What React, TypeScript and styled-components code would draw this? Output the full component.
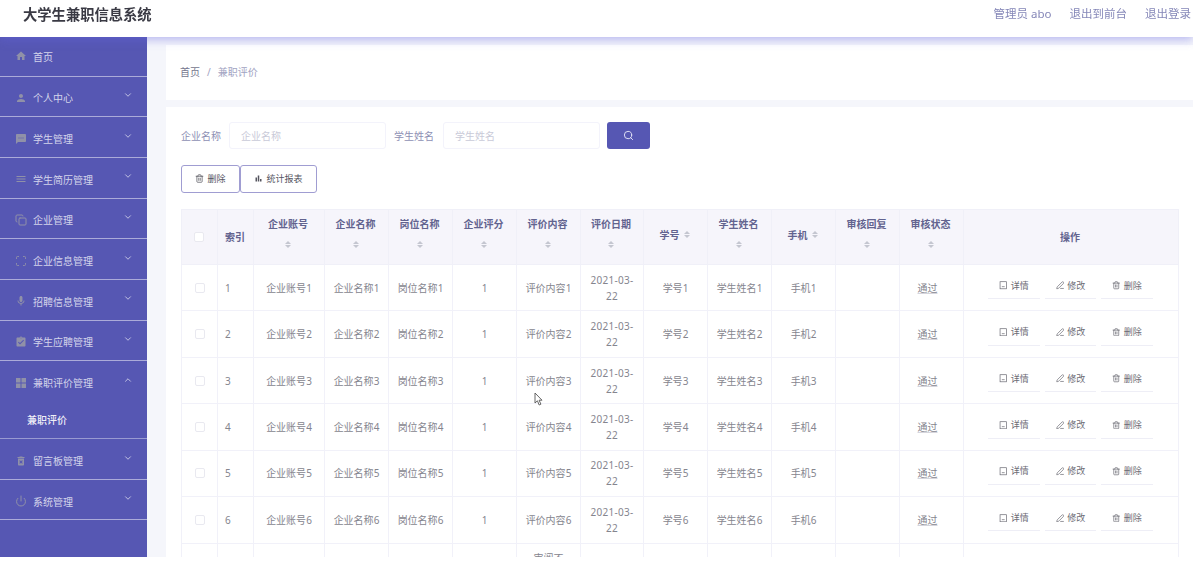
import React from "react";
import styled, { createGlobalStyle } from "styled-components";
import { ChevronDown, ChevronUp, Copy, Power, Scan, Search, Trash2, PenLine } from "lucide-react";
import { MdHome, MdPerson, MdSms, MdMenu, MdMic, MdAssignmentTurnedIn, MdDeleteForever, MdBarChart } from "react-icons/md";

const Global = createGlobalStyle`
  html, body { margin: 0; padding: 0; background: #fff; }
  body { font-family: "Noto Sans", "Noto Sans CJK SC", sans-serif; }
  * { box-sizing: border-box; }
`;

const Page = styled.div`
  width: 1193px;
  height: 557px;
  overflow: hidden;
  display: flex;
  flex-direction: column;
  position: relative;
  filter: blur(0.55px);
`;

const Header = styled.header`
  height: 37px;
  flex: none;
  display: flex;
  align-items: flex-start;
  justify-content: space-between;
  padding: 5px 2px 0 23px;
  background: #fff;
  position: relative;
  z-index: 2;
  box-shadow: 0 3px 9px rgba(100, 100, 225, 0.42);
`;

const Title = styled.div`
  font-size: 14.3px;
  line-height: 20px;
  font-weight: 700;
  color: #3a3a44;
`;

const HeaderLinks = styled.div`
  display: flex;
  gap: 18px;
  font-size: 11.5px;
  line-height: 18px;
  color: #8587b8;
`;

const Body = styled.div`
  flex: 1;
  display: flex;
  min-height: 0;
`;

const Sidebar = styled.nav`
  width: 147px;
  flex: none;
  background: #5657b3;
`;

const MenuItem = styled.div<{ $h: number; $first?: boolean }>`
  height: ${(p) => p.$h}px;
  display: flex;
  align-items: center;
  padding: ${(p) => (p.$first ? "0" : "3px")} 14px 0 15px;
  border-bottom: 1px solid rgba(255, 255, 255, 0.5);
  color: rgba(255, 255, 255, 0.75);
  font-size: 10px;
`;

const MenuGroupHead = styled(MenuItem)`
  border-bottom: none;
`;

const MenuIcon = styled.span`
  width: 18px;
  height: 12px;
  flex: none;
  display: flex;
  align-items: center;
  color: #9091a8;
  svg { width: 12px; height: 12px; display: block; }
`;

const MenuLabel = styled.span`
  flex: 1;
`;

const Arrow = styled.span`
  display: flex;
  margin-top: -6px;
  color: rgba(255, 255, 255, 0.75);
  svg { width: 10px; height: 10px; display: block; }
`;

const SubItem = styled.div`
  height: 38px;
  display: flex;
  align-items: center;
  padding: 0 0 1px 27px;
  border-bottom: 1px solid rgba(255, 255, 255, 0.4);
  color: rgba(255, 255, 255, 0.92);
  font-size: 10px;
  font-weight: 500;
`;

const Main = styled.main`
  flex: 1;
  min-width: 0;
  background: #f5f6fb;
  padding: 8px 0 0 19px;
  display: flex;
  flex-direction: column;
  gap: 7px;
`;

const Crumbs = styled.div`
  height: 55px;
  flex: none;
  background: #fff;
  display: flex;
  align-items: center;
  padding: 0 14px 2px;
  font-size: 10px;
  gap: 7px;
  color: #a1a3c2;
`;

const CrumbHome = styled.span`
  color: #74768e;
`;

const Card = styled.section`
  flex: 1;
  min-height: 0;
  background: #fff;
  padding: 15px 15px 0;
  overflow: hidden;
`;

const SearchRow = styled.div`
  display: flex;
  align-items: center;
  height: 27px;
`;

const FieldLabel = styled.label<{ $w: number }>`
  font-size: 10px;
  color: #8e90b4;
  width: ${(p) => p.$w}px;
  flex: none;
`;

const FakeInput = styled.div`
  width: 157px;
  height: 26.5px;
  flex: none;
  border: 1px solid #f3f3fb;
  border-radius: 3px;
  font-size: 10px;
  color: #c9cad8;
  display: flex;
  align-items: center;
  padding-left: 11px;
  margin-right: 8px;
`;

const SearchButton = styled.button`
  width: 43px;
  height: 27px;
  margin-left: -1px;
  border: none;
  border-radius: 3px;
  background: #5657b3;
  color: #e8e8f8;
  display: flex;
  align-items: center;
  justify-content: center;
  padding: 0;
  svg { width: 11px; height: 11px; display: block; }
`;

const Toolbar = styled.div`
  display: flex;
  margin-top: 16px;
  margin-bottom: 16px;
`;

const ToolButton = styled.button<{ $w: number }>`
  width: ${(p) => p.$w}px;
  height: 27.5px;
  background: #fff;
  border: 1px solid #a09dd2;
  border-radius: 3px;
  display: flex;
  align-items: center;
  justify-content: center;
  gap: 3px;
  padding: 0;
  font: inherit;
  font-size: 9px;
  color: #55555f;
  svg { width: 9px; height: 9px; display: block; }
`;

const Table = styled.table`
  width: 997px;
  table-layout: fixed;
  border-collapse: collapse;
  border: 1px solid #f1f1f9;
`;

const Th = styled.th<{ $left?: boolean }>`
  height: 55.5px;
  padding: ${(p) => (p.$left ? "0 0 0 7px" : "0 2px 0 0")};
  background: #f6f5fb;
  border: 1px solid #f0f0f8;
  font-size: 10px;
  font-weight: 700;
  color: #62638f;
  text-align: ${(p) => (p.$left ? "left" : "center")};
  vertical-align: middle;
`;

const ThStack = styled.div`
  display: flex;
  flex-direction: column;
  align-items: center;
  gap: 10px;
  padding-bottom: 10px;
`;

const ThInline = styled.div`
  display: flex;
  align-items: center;
  justify-content: center;
  gap: 4px;
  padding-bottom: 5px;
`;

const Sort = styled.span`
  display: inline-flex;
  flex-direction: column;
  gap: 1.5px;
  &::before, &::after {
    content: "";
    width: 0;
    height: 0;
    border-left: 3px solid transparent;
    border-right: 3px solid transparent;
  }
  &::before { border-bottom: 3px solid #c4c6d0; }
  &::after { border-top: 3px solid #c4c6d0; }
`;

const Td = styled.td<{ $left?: boolean; $narrow?: boolean }>`
  height: 46.45px;
  padding: ${(p) => (p.$left ? "0 0 0 7px" : p.$narrow ? "0 9px" : "0 2px")};
  border: 1px solid #f1f1f9;
  font-size: 10px;
  line-height: 16px;
  color: #85858e;
  text-align: ${(p) => (p.$left ? "left" : "center")};
  vertical-align: middle;
  word-break: break-word;
`;

const DateText = styled.span`
  display: block;
  font-size: 10px;
  letter-spacing: 0.3px;
`;

const Status = styled.span`
  display: inline-block;
  margin-right: 8px;
  text-decoration: underline;
  text-decoration-color: #d5d5dc;
`;

const Check = styled.span`
  display: block;
  width: 10px;
  height: 10px;
  margin: 0 auto;
  border: 1px solid #e9e9f0;
  border-radius: 2px;
  background: #fff;
`;

const Actions = styled.div`
  display: flex;
  justify-content: center;
  gap: 5px;
  padding: 0 1px 1px 0;
`;

const ActionButton = styled.span`
  width: 51.5px;
  height: 24px;
  display: flex;
  align-items: center;
  justify-content: center;
  gap: 3px;
  padding-bottom: 2px;
  border-bottom: 1px solid #eeeef6;
  font-size: 9px;
  color: #6b6b74;
  svg { width: 8.5px; height: 8.5px; display: block; }
`;

const Cursor = styled.svg`
  position: absolute;
  left: 534px;
  top: 392px;
  width: 10px;
  height: 14px;
`;

const DocIcon = () => (
  <svg viewBox="0 0 12 12" fill="none" stroke="currentColor" strokeWidth="1">
    <rect x="1.5" y="1" width="9" height="10" />
    <path d="M4 8h4" />
  </svg>
);

const GridIcon = () => (
  <svg viewBox="0 0 12 12" fill="currentColor">
    <rect x="1" y="1" width="4.5" height="4.5" />
    <rect x="6.5" y="1" width="4.5" height="4.5" />
    <rect x="1" y="6.5" width="4.5" height="4.5" />
    <rect x="6.5" y="6.5" width="4.5" height="4.5" />
  </svg>
);

const menu: [React.ReactNode, string][] = [
  [<MdPerson />, "个人中心"],
  [<MdSms />, "学生管理"],
  [<MdMenu />, "学生简历管理"],
  [<Copy />, "企业管理"],
  [<Scan />, "企业信息管理"],
  [<MdMic />, "招聘信息管理"],
  [<MdAssignmentTurnedIn />, "学生应聘管理"],
];

const columns: { label: string; inline?: boolean }[] = [
  { label: "企业账号" },
  { label: "企业名称" },
  { label: "岗位名称" },
  { label: "企业评分" },
  { label: "评价内容" },
  { label: "评价日期" },
  { label: "学号", inline: true },
  { label: "学生姓名" },
  { label: "手机", inline: true },
  { label: "审核回复" },
  { label: "审核状态" },
];

const widths = [36, 36, 71, 64, 64, 64, 64, 63, 64, 64, 64, 64, 64, 215];

export default function App() {
  const rows = [1, 2, 3, 4, 5, 6];
  return (
    <Page>
      <Global />
      <Header>
        <Title>大学生兼职信息系统</Title>
        <HeaderLinks>
          <span>管理员 abo</span>
          <span>退出到前台</span>
          <span>退出登录</span>
        </HeaderLinks>
      </Header>
      <Body>
        <Sidebar>
          <MenuItem $h={39.5} $first>
            <MenuIcon><MdHome /></MenuIcon>
            <MenuLabel>首页</MenuLabel>
          </MenuItem>
          {menu.map(([icon, label]) => (
            <MenuItem $h={40.7} key={label}>
              <MenuIcon>{icon}</MenuIcon>
              <MenuLabel>{label}</MenuLabel>
              <Arrow><ChevronDown /></Arrow>
            </MenuItem>
          ))}
          <MenuGroupHead $h={40}>
            <MenuIcon><GridIcon /></MenuIcon>
            <MenuLabel>兼职评价管理</MenuLabel>
            <Arrow><ChevronUp /></Arrow>
          </MenuGroupHead>
          <SubItem>兼职评价</SubItem>
          <MenuItem $h={40.5}>
            <MenuIcon><MdDeleteForever /></MenuIcon>
            <MenuLabel>留言板管理</MenuLabel>
            <Arrow><ChevronDown /></Arrow>
          </MenuItem>
          <MenuItem $h={40.5}>
            <MenuIcon><Power /></MenuIcon>
            <MenuLabel>系统管理</MenuLabel>
            <Arrow><ChevronDown /></Arrow>
          </MenuItem>
        </Sidebar>
        <Main>
          <Crumbs>
            <CrumbHome>首页</CrumbHome>
            <span>/</span>
            <span>兼职评价</span>
          </Crumbs>
          <Card>
            <SearchRow>
              <FieldLabel $w={48}>企业名称</FieldLabel>
              <FakeInput>企业名称</FakeInput>
              <FieldLabel $w={49}>学生姓名</FieldLabel>
              <FakeInput>学生姓名</FakeInput>
              <SearchButton aria-label="搜索"><Search /></SearchButton>
            </SearchRow>
            <Toolbar>
              <ToolButton $w={59}><Trash2 />删除</ToolButton>
              <ToolButton $w={77}><MdBarChart />统计报表</ToolButton>
            </Toolbar>
            <Table>
              <colgroup>
                {widths.map((w, i) => <col key={i} style={{ width: w }} />)}
              </colgroup>
              <thead>
                <tr>
                  <Th><Check /></Th>
                  <Th $left>索引</Th>
                  {columns.map((c) => (
                    <Th key={c.label}>
                      {c.inline ? (
                        <ThInline>{c.label}<Sort /></ThInline>
                      ) : (
                        <ThStack>{c.label}<Sort /></ThStack>
                      )}
                    </Th>
                  ))}
                  <Th>操作</Th>
                </tr>
              </thead>
              <tbody>
                {rows.map((n) => (
                  <tr key={n}>
                    <Td><Check /></Td>
                    <Td $left>{n}</Td>
                    <Td>企业账号{n}</Td>
                    <Td>企业名称{n}</Td>
                    <Td>岗位名称{n}</Td>
                    <Td>1</Td>
                    <Td>评价内容{n}</Td>
                    <Td $narrow><DateText>2021-03-22</DateText></Td>
                    <Td>学号{n}</Td>
                    <Td>学生姓名{n}</Td>
                    <Td>手机{n}</Td>
                    <Td></Td>
                    <Td><Status>通过</Status></Td>
                    <Td>
                      <Actions>
                        <ActionButton><DocIcon />详情</ActionButton>
                        <ActionButton><PenLine />修改</ActionButton>
                        <ActionButton><Trash2 />删除</ActionButton>
                      </Actions>
                    </Td>
                  </tr>
                ))}
                <tr>
                  <Td /><Td /><Td /><Td /><Td /><Td />
                  <Td $narrow>审阅不<br />通过</Td>
                  <Td /><Td /><Td /><Td /><Td /><Td /><Td />
                </tr>
              </tbody>
            </Table>
          </Card>
        </Main>
      </Body>
      <Cursor viewBox="0 0 10 14">
        <path d="M1 1v10l2.4-2.2L5.2 13l1.7-.8-1.8-4H8z" fill="#fff" stroke="#555" strokeWidth="0.9" />
      </Cursor>
    </Page>
  );
}
